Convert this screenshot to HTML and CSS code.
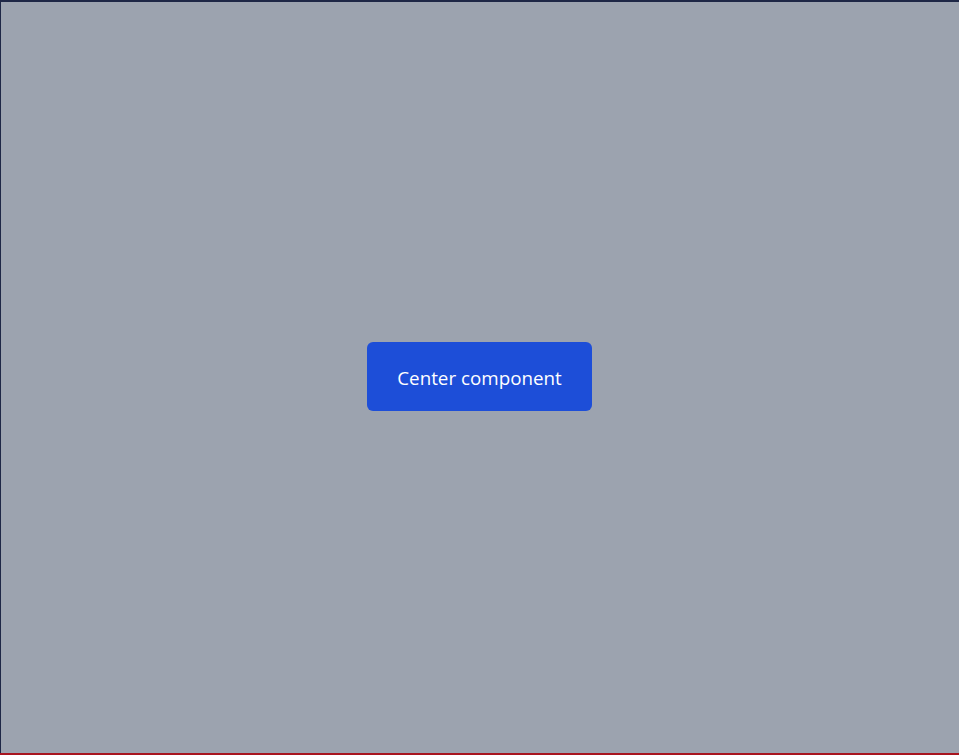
FILE: index.html
```html
<!DOCTYPE html>
<html lang="en">
<head>
<meta charset="utf-8">
<title>Center component</title>
<link rel="stylesheet" href="styles.css">
</head>
<body>
<main class="stage">
  <button class="center-btn" type="button">Center component</button>
</main>
</body>
</html>
```
FILE: styles.css
```css
html, body {
  margin: 0;
  padding: 0;
  height: 100%;
}
body {
  background: #9ca3af;
  font-family: "Open Sans", "Noto Sans", sans-serif;
}
.stage {
  box-sizing: border-box;
  height: 100vh;
  border-bottom: 2px solid #a8141e;
  box-shadow: inset 1px 2px 0 #1e2746;
  display: flex;
  align-items: center;
  justify-content: center;
}
.center-btn {
  box-sizing: border-box;
  width: 225px;
  height: 69px;
  background: #1d4ed8;
  color: #fff;
  border: none;
  border-radius: 6px;
  font-family: "Open Sans", "Noto Sans", sans-serif;
  font-size: 18.8px;
  padding: 2px 0 0;
}
```
